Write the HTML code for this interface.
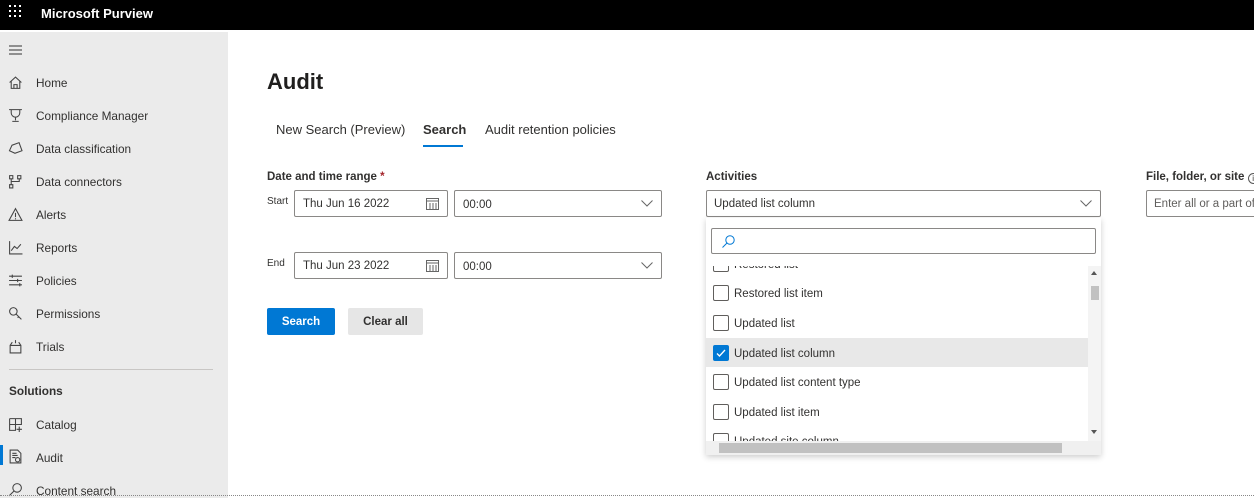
<!DOCTYPE html>
<html><head><style>
*{box-sizing:border-box;margin:0;padding:0}
body{width:1254px;height:498px;overflow:hidden;background:#fff;font-family:"Liberation Sans",sans-serif;color:#323130;position:relative}
.top{position:absolute;left:0;top:0;width:1254px;height:30px;background:#000;color:#fff}
.top .t{position:absolute;left:41px;top:6px;font-size:13px;font-weight:bold}
.side{position:absolute;left:0;top:32px;width:228px;height:466px;background:#ebebeb}
.nav{position:absolute;left:36px;font-size:11.8px;color:#323130}
.ic{position:absolute;left:8px;width:15px;height:15px}
.a{position:absolute;white-space:nowrap}
.box{position:absolute;border:1px solid #8a8886;background:#fff;border-radius:2px;font-size:11.5px}
.cb{position:absolute;left:7px;width:16px;height:16px;border:1px solid #605e5c;border-radius:2px;background:#fff}
.row{position:absolute;left:0;width:382px;height:29px;font-size:11.5px}
.row span{position:absolute;left:28px;top:10px}
</style></head><body>
<div class="top">
<svg style="position:absolute;left:9px;top:5px" width="12" height="12"><g fill="#fff"><rect x="0" y="0" width="2" height="2"/><rect x="5" y="0" width="2" height="2"/><rect x="10" y="0" width="2" height="2"/><rect x="0" y="5" width="2" height="2"/><rect x="5" y="5" width="2" height="2"/><rect x="10" y="5" width="2" height="2"/><rect x="0" y="10" width="2" height="2"/><rect x="5" y="10" width="2" height="2"/><rect x="10" y="10" width="2" height="2"/></g></svg>
<div class="t">Microsoft Purview</div></div>
<div class="side">
<svg style="position:absolute;left:9px;top:13px" width="14" height="10"><path d="M0 1h13M0 5h13M0 9h13" stroke="#333" stroke-width="1"/></svg>
<svg class="ic" style="top:43px" viewBox="0 0 14 14"><path d="M1.5 7L7 2 12.5 7M3 5.5v7h8v-7M5.5 12.5V9h3v3.5" fill="none" stroke="#444"/></svg>
<div class="nav" style="top:44px">Home</div>
<svg class="ic" style="top:76px" viewBox="0 0 14 14"><path d="M3 1.5h8v3a4 4 0 0 1-8 0zM1 1.5h2v3M13 1.5h-2v3M7 8.5v3M4 12.5h6" fill="none" stroke="#444"/></svg>
<div class="nav" style="top:77px">Compliance Manager</div>
<svg class="ic" style="top:109px" viewBox="0 0 14 14"><path d="M1 7l4-4h7v8H5z" fill="none" stroke="#444" transform="rotate(-20 7 7)"/></svg>
<div class="nav" style="top:110px">Data classification</div>
<svg class="ic" style="top:142px" viewBox="0 0 14 14"><path d="M1.5 1.5h3v3h-3zM9 1.5h3v3H9zM1.5 10h3v3h-3zM3 4.5V10M10.5 4.5V7H3" fill="none" stroke="#444"/></svg>
<div class="nav" style="top:143px">Data connectors</div>
<svg class="ic" style="top:175px" viewBox="0 0 14 14"><path d="M7 1.5L13 12.5H1zM7 5.5v4M7 10.5v1" fill="none" stroke="#444"/></svg>
<div class="nav" style="top:176px">Alerts</div>
<svg class="ic" style="top:208px" viewBox="0 0 14 14"><path d="M1.5 1v12h12M3 10l3-4 2.5 2L12 4" fill="none" stroke="#444"/></svg>
<div class="nav" style="top:209px">Reports</div>
<svg class="ic" style="top:241px" viewBox="0 0 14 14"><path d="M1 3h12M1 7h12M1 11h12M4 1.5v3M9 5.5v3M11 9.5v3" fill="none" stroke="#444"/></svg>
<div class="nav" style="top:242px">Policies</div>
<svg class="ic" style="top:274px" viewBox="0 0 14 14"><circle cx="5" cy="5" r="3.5" fill="none" stroke="#444"/><path d="M7.5 7.5l5 5M10 10l-1 1" stroke="#444" fill="none"/></svg>
<div class="nav" style="top:275px">Permissions</div>
<svg class="ic" style="top:307px" viewBox="0 0 14 14"><path d="M2 6h10v7H2zM2 6l2-3M12 6l-2-3M7 1v3" fill="none" stroke="#444"/></svg>
<div class="nav" style="top:308px">Trials</div>
<div style="position:absolute;left:9px;top:337px;width:204px;height:1px;background:#c8c6c4"></div>
<div class="nav" style="left:9px;top:352px;font-weight:bold;font-size:11.8px">Solutions</div>
<svg class="ic" style="top:385px" viewBox="0 0 14 14"><path d="M1.5 1.5h11v6M1.5 1.5v11h6M1.5 7h11M7 1.5v11M10.5 9v5M8 11.5h5" fill="none" stroke="#444"/></svg>
<div class="nav" style="top:386px">Catalog</div>
<div style="position:absolute;left:0;top:413px;width:3px;height:20px;background:#0078d4"></div>
<svg class="ic" style="top:417px" viewBox="0 0 14 14"><path d="M2 1h7l3 3v9H2zM4 4h4M4 6h5M4 8h3" fill="none" stroke="#444"/><circle cx="9" cy="10" r="2" fill="none" stroke="#444"/></svg>
<div class="nav" style="top:419px">Audit</div>
<svg class="ic" style="top:450px" viewBox="0 0 14 14"><circle cx="8.5" cy="5.5" r="4" fill="none" stroke="#444"/><path d="M5.5 8.5L1 13" stroke="#444"/></svg>
<div class="nav" style="top:452px">Content search</div>
</div>
<div style="position:absolute;left:0;top:495px;width:1254px;border-top:1px dotted #888"></div>
<div class="a" style="left:267px;top:69px;font-size:22px;font-weight:bold;color:#201f1e">Audit</div>
<div class="a" style="left:276px;top:122px;font-size:13px">New Search (Preview)</div>
<div class="a" style="left:423px;top:122px;font-size:13px;font-weight:bold">Search</div>
<div style="position:absolute;left:423px;top:145px;width:40px;height:2px;background:#0078d4"></div>
<div class="a" style="left:485px;top:122px;font-size:13px">Audit retention policies</div>
<div class="a" style="left:267px;top:171px;font-size:11.5px;font-weight:bold">Date and time range <span style="color:#a4262c">*</span></div>
<div class="a" style="left:267px;top:196px;font-size:10px">Start</div>
<div class="box" style="left:294px;top:190px;width:154px;height:27px"><span class="a" style="left:8px;top:7px">Thu Jun 16 2022</span><svg style="position:absolute;right:8px;top:6px" width="13" height="13"><path d="M.5 1.5h12v11H.5zM.5 4h12M4 6v6M7 6v6M10 6v6" fill="none" stroke="#666"/></svg></div>
<div class="box" style="left:454px;top:190px;width:208px;height:27px"><span class="a" style="left:8px;top:8px">00:00</span><svg style="position:absolute;right:8px;top:9px" width="12" height="7"><path d="M.5.5l5.5 5.5 5.5-5.5" fill="none" stroke="#666"/></svg></div>
<div class="a" style="left:267px;top:258px;font-size:10px">End</div>
<div class="box" style="left:294px;top:252px;width:154px;height:27px"><span class="a" style="left:8px;top:7px">Thu Jun 23 2022</span><svg style="position:absolute;right:8px;top:6px" width="13" height="13"><path d="M.5 1.5h12v11H.5zM.5 4h12M4 6v6M7 6v6M10 6v6" fill="none" stroke="#666"/></svg></div>
<div class="box" style="left:454px;top:252px;width:208px;height:27px"><span class="a" style="left:8px;top:8px">00:00</span><svg style="position:absolute;right:8px;top:9px" width="12" height="7"><path d="M.5.5l5.5 5.5 5.5-5.5" fill="none" stroke="#666"/></svg></div>
<div class="a" style="left:267px;top:308px;width:68px;height:27px;background:#0078d4;border-radius:2px;color:#fff;font-size:11.5px;font-weight:bold;text-align:center;line-height:28px">Search</div>
<div class="a" style="left:348px;top:308px;width:75px;height:27px;background:#e6e6e6;border-radius:2px;font-size:11.5px;font-weight:bold;text-align:center;line-height:28px">Clear all</div>
<div class="a" style="left:706px;top:171px;font-size:11.5px;font-weight:bold">Activities</div>
<div class="box" style="left:706px;top:190px;width:395px;height:27px"><span class="a" style="left:7px;top:7px">Updated list column</span><svg style="position:absolute;right:8px;top:9px" width="12" height="7"><path d="M.5.5l5.5 5.5 5.5-5.5" fill="none" stroke="#666"/></svg></div>
<div style="position:absolute;left:706px;top:218px;width:395px;height:237px;background:#fff;box-shadow:0 2px 6px rgba(0,0,0,.2);overflow:hidden">
<div class="box" style="left:5px;top:10px;width:385px;height:26px"><svg style="position:absolute;left:9px;top:5px" width="15" height="15"><circle cx="9" cy="6" r="4.2" fill="none" stroke="#0078d4"/><path d="M6 9L1.5 13.5" stroke="#0078d4"/></svg></div>
<div style="position:absolute;left:0;top:48px;width:382px;height:175px;overflow:hidden">
<div class="row" style="top:-17px"><div class="cb" style="top:7px"></div><span>Restored list</span></div>
<div class="row" style="top:12px"><div class="cb" style="top:7px"></div><span>Restored list item</span></div>
<div class="row" style="top:42px"><div class="cb" style="top:7px"></div><span>Updated list</span></div>
<div class="row" style="top:72px;background:#e8e8e8"><div class="cb" style="top:7px;background:#0078d4;border-color:#0078d4"><svg width="14" height="14" style="position:absolute;left:0;top:0"><path d="M3 7.5l2.5 2.5L11 4" fill="none" stroke="#fff" stroke-width="1.3"/></svg></div><span>Updated list column</span></div>
<div class="row" style="top:101px"><div class="cb" style="top:7px"></div><span>Updated list content type</span></div>
<div class="row" style="top:131px"><div class="cb" style="top:7px"></div><span>Updated list item</span></div>
<div class="row" style="top:160px"><div class="cb" style="top:7px"></div><span>Updated site column</span></div>
</div>
<div style="position:absolute;left:382px;top:48px;width:13px;height:175px;background:#f4f4f4"><div style="position:absolute;left:3px;top:20px;width:8px;height:14px;background:#c1c1c1"></div><div style="position:absolute;left:3px;top:5px;border:3px solid transparent;border-bottom:4px solid #555;border-top:0"></div><div style="position:absolute;left:3px;top:164px;border:3px solid transparent;border-top:4px solid #555;border-bottom:0"></div></div>
<div style="position:absolute;left:0;top:223px;width:395px;height:14px;background:#f0f0f0"><div style="position:absolute;left:13px;top:2px;width:343px;height:10px;background:#c1c1c1"></div></div>
</div>
<div class="a" style="left:1146px;top:171px;font-size:11.5px;font-weight:bold">File, folder, or site <span style="display:inline-block;width:11px;height:11px;border:1px solid #555;border-radius:50%;font-size:8px;text-align:center;line-height:9px;font-weight:normal;vertical-align:-1px">i</span></div>
<div class="box" style="left:1146px;top:190px;width:120px;height:27px"><span class="a" style="left:7px;top:7px;color:#605e5c">Enter all or a part of</span></div>
</body></html>
